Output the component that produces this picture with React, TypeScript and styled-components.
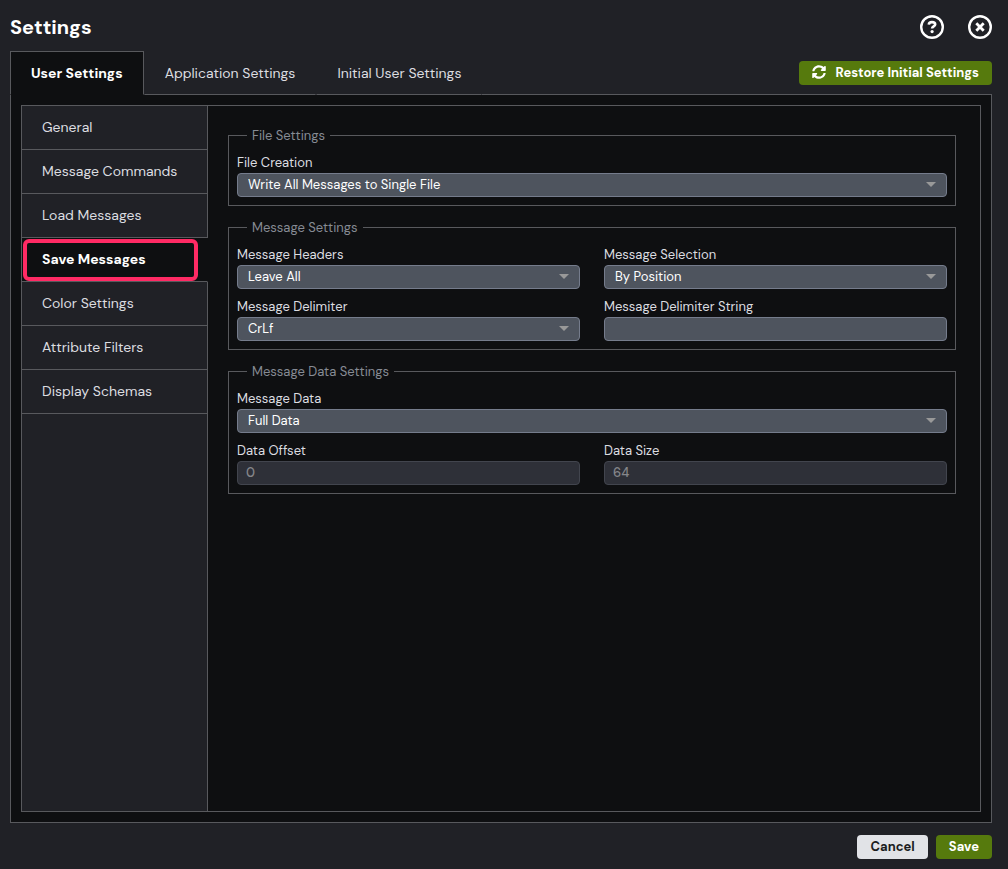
import React from "react";
import styled, { createGlobalStyle } from "styled-components";
import { FaSyncAlt } from "react-icons/fa";

const color = {
  chrome: "#202126",
  panel: "#0e0f11",
  line: "#58595d",
  text: "#dcdde0",
  muted: "#868b94",
  field: "#4e545e",
  fieldLine: "#757c8c",
  off: "#2e3038",
  offLine: "#42454e",
  green: "#567a0d",
  accent: "#ff2a64",
};

const GlobalStyle = createGlobalStyle`
  *, *::before, *::after { box-sizing: border-box; }
  body {
    margin: 0;
    background: ${color.chrome};
    color: ${color.text};
    font-family: "DM Sans", Inter, sans-serif;
    font-size: 13px;
  }
  button, input, select { font: inherit; }
`;

const Dialog = styled.main`
  display: flex;
  flex-direction: column;
  min-height: 100vh;
  padding: 0 16px 10px 10px;
`;

const Header = styled.header`
  display: flex;
  align-items: center;
  justify-content: space-between;
  height: 51px;
  padding-top: 2px;
`;

const Title = styled.h1`
  margin: 0;
  font-size: 20px;
  line-height: 28px;
  font-weight: 700;
  color: #fff;
`;

const HeaderActions = styled.div`
  display: flex;
  gap: 24px;
`;

const IconButton = styled.button`
  display: flex;
  padding: 0;
  border: 0;
  background: none;
  color: #fff;
  cursor: pointer;
`;

const TabBar = styled.div`
  display: flex;
  height: 44px;
`;

const Tab = styled.button<{ $active?: boolean }>`
  padding: 0 20px;
  border: 1px solid ${(p) => (p.$active ? color.line : "transparent")};
  border-bottom-color: ${(p) => (p.$active ? color.panel : color.line)};
  background: ${(p) => (p.$active ? color.panel : color.chrome)};
  color: ${(p) => (p.$active ? "#fff" : color.text)};
  font-size: 14px;
  font-weight: ${(p) => (p.$active ? 700 : 400)};
  white-space: nowrap;
  cursor: pointer;
`;

const TabBarEnd = styled.div`
  display: flex;
  flex: 1;
  align-items: center;
  justify-content: flex-end;
  padding-top: 1px;
  border-bottom: 1px solid ${color.line};
`;

const Button = styled.button<{ $light?: boolean }>`
  display: flex;
  align-items: center;
  gap: 10px;
  height: 24px;
  padding: 0 13px 2px;
  border: 0;
  border-radius: 4px;
  background: ${(p) => (p.$light ? "#e1e3e7" : color.green)};
  color: ${(p) => (p.$light ? "#1b1c20" : "#fff")};
  font-weight: 700;
  white-space: nowrap;
  cursor: pointer;
`;

const Panel = styled.section`
  display: flex;
  flex: 1;
  padding: 10px;
  border: 1px solid ${color.line};
  border-top: 0;
  background: ${color.panel};
`;

const PanelBody = styled.div`
  display: flex;
  flex: 1;
  border: 1px solid ${color.line};
`;

const Sidebar = styled.nav`
  display: flex;
  flex-direction: column;
  flex: 0 0 186px;
`;

const SidebarItem = styled.button<{ $active?: boolean }>`
  position: relative;
  height: 44px;
  padding: 0 20px 2px;
  border: 0;
  border-right: 1px solid ${(p) => (p.$active ? color.panel : color.line)};
  border-bottom: 1px solid ${color.line};
  background: ${(p) => (p.$active ? color.panel : color.chrome)};
  color: ${(p) => (p.$active ? "#fff" : color.text)};
  font-size: 14px;
  font-weight: ${(p) => (p.$active ? 700 : 400)};
  text-align: left;
  white-space: nowrap;
  cursor: pointer;
`;

const SidebarRest = styled.div`
  flex: 1;
  border-right: 1px solid ${color.line};
  background: ${color.chrome};
`;

const Highlight = styled.span`
  position: absolute;
  inset: 1px 9px 0 1px;
  border: 4px solid ${color.accent};
  border-radius: 6px;
  pointer-events: none;
`;

const Content = styled.form`
  display: flex;
  flex-direction: column;
  flex: 1;
  gap: 11px;
  min-width: 0;
  padding: 19px 24px 20px 20px;
`;

const Group = styled.fieldset`
  min-width: 0;
  margin: 0;
  padding: 8px;
  border: 1px solid ${color.line};
`;

const Legend = styled.legend`
  margin-left: 10px;
  padding: 2px 5px 0;
  line-height: 18px;
  color: ${color.muted};
`;

const FieldGrid = styled.div`
  display: grid;
  grid-template-columns: repeat(2, minmax(0, 1fr));
  gap: 8px 24px;
`;

const Field = styled.div<{ $wide?: boolean }>`
  position: relative;
  display: flex;
  flex-direction: column;
  grid-column: ${(p) => (p.$wide ? "1 / -1" : "auto")};
`;

const FieldLabel = styled.label`
  line-height: 20px;
`;

const Select = styled.select`
  appearance: none;
  height: 24px;
  padding: 0 28px 2px 10px;
  border: 1px solid ${color.fieldLine};
  border-radius: 4px;
  background: ${color.field};
  color: #fff;
`;

const Caret = styled.svg`
  position: absolute;
  right: 11px;
  bottom: 10px;
  pointer-events: none;
`;

const TextInput = styled.input`
  width: 100%;
  height: 24px;
  padding: 0 8px 1px;
  border: 1px solid ${color.fieldLine};
  border-radius: 4px;
  background: ${color.field};
  color: #fff;
  font-weight: 500;

  &:disabled {
    border-color: ${color.offLine};
    background: ${color.off};
    color: #85868a;
  }
`;

const Footer = styled.footer`
  display: flex;
  justify-content: flex-end;
  gap: 8px;
  padding-top: 12px;
`;

function SelectField({ id, label, value, wide }: { id: string; label: string; value: string; wide?: boolean }) {
  return (
    <Field $wide={wide}>
      <FieldLabel htmlFor={id}>{label}</FieldLabel>
      <Select id={id} defaultValue={value}>
        <option>{value}</option>
      </Select>
      <Caret width="10" height="5" viewBox="0 0 10 5" aria-hidden="true">
        <path d="M0 0h10L5 5z" fill="#999" />
      </Caret>
    </Field>
  );
}

function InputField({ id, label, value, disabled }: { id: string; label: string; value: string; disabled?: boolean }) {
  return (
    <Field>
      <FieldLabel htmlFor={id}>{label}</FieldLabel>
      <TextInput id={id} defaultValue={value} disabled={disabled} />
    </Field>
  );
}

const sections = [
  "General",
  "Message Commands",
  "Load Messages",
  "Save Messages",
  "Color Settings",
  "Attribute Filters",
  "Display Schemas",
];
const activeSection = "Save Messages";

export default function App() {
  return (
    <>
      <GlobalStyle />
      <Dialog>
        <Header>
          <Title>Settings</Title>
          <HeaderActions>
            <IconButton type="button" aria-label="Help">
              <svg width="24" height="24" viewBox="0 0 24 24" fill="none" stroke="currentColor">
                <circle cx="12" cy="12" r="10.8" strokeWidth="2.4" />
                <path d="M8.8 9.6C8.9 8 10.1 7.1 12 7.1s3.2.9 3.2 2.4c0 1.9-3.1 2-3.1 4" strokeWidth="2.6" />
                <circle cx="12.1" cy="16.6" r="1.6" fill="currentColor" stroke="none" />
              </svg>
            </IconButton>
            <IconButton type="button" aria-label="Close">
              <svg width="24" height="24" viewBox="0 0 24 24" fill="none" stroke="currentColor">
                <circle cx="12" cy="12" r="10.8" strokeWidth="2.4" />
                <path d="M8.3 8.3l7.4 7.4M15.7 8.3l-7.4 7.4" strokeWidth="2.8" />
              </svg>
            </IconButton>
          </HeaderActions>
        </Header>

        <TabBar>
          <Tab type="button" $active>User Settings</Tab>
          <Tab type="button">Application Settings</Tab>
          <Tab type="button">Initial User Settings</Tab>
          <TabBarEnd>
            <Button type="button">
              <FaSyncAlt size={14} />
              Restore Initial Settings
            </Button>
          </TabBarEnd>
        </TabBar>

        <Panel>
          <PanelBody>
            <Sidebar>
              {sections.map((name) => (
                <SidebarItem key={name} type="button" $active={name === activeSection}>
                  {name}
                  {name === activeSection && <Highlight />}
                </SidebarItem>
              ))}
              <SidebarRest />
            </Sidebar>

            <Content id="save-messages-form">
              <Group>
                <Legend>File Settings</Legend>
                <FieldGrid>
                  <SelectField id="file-creation" label="File Creation" value="Write All Messages to Single File" wide />
                </FieldGrid>
              </Group>
              <Group>
                <Legend>Message Settings</Legend>
                <FieldGrid>
                  <SelectField id="headers" label="Message Headers" value="Leave All" />
                  <SelectField id="selection" label="Message Selection" value="By Position" />
                  <SelectField id="delimiter" label="Message Delimiter" value="CrLf" />
                  <InputField id="delimiter-string" label="Message Delimiter String" value="" />
                </FieldGrid>
              </Group>
              <Group>
                <Legend>Message Data Settings</Legend>
                <FieldGrid>
                  <SelectField id="data" label="Message Data" value="Full Data" wide />
                  <InputField id="offset" label="Data Offset" value="0" disabled />
                  <InputField id="size" label="Data Size" value="64" disabled />
                </FieldGrid>
              </Group>
            </Content>
          </PanelBody>
        </Panel>

        <Footer>
          <Button type="button" $light>Cancel</Button>
          <Button type="submit" form="save-messages-form">Save</Button>
        </Footer>
      </Dialog>
    </>
  );
}
